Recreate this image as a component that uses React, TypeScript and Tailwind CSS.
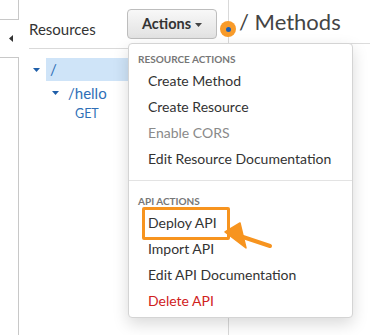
import { Fragment } from 'react'

const resourceActions = [
  { label: 'Create Method' },
  { label: 'Create Resource' },
  { label: 'Enable CORS', disabled: true },
  { label: 'Edit Resource Documentation' },
]

const apiActions = [
  { label: 'Deploy API', highlight: true },
  { label: 'Import API' },
  { label: 'Edit API Documentation' },
  { label: 'Delete API', danger: true },
]

function MenuItem({ label, disabled, danger }: { label: string; disabled?: boolean; danger?: boolean }) {
  const color = disabled ? 'text-[#8a8a8a]' : danger ? 'text-[#d0211c]' : 'text-[#333]'
  return (
    <div className={`h-[26px] flex items-center pl-[19px] text-[14px] ${color}`}>{label}</div>
  )
}

function Caret({ className }: { className?: string }) {
  return (
    <svg width="7" height="4" viewBox="0 0 7 4" className={className}>
      <path d="M0 0h7L3.5 4z" fill="currentColor" />
    </svg>
  )
}

export default function App() {
  return (
    <div
      className="relative w-[370px] h-[335px] overflow-hidden bg-white flex"
      style={{ fontFamily: 'Lato, "Open Sans", sans-serif' }}
    >
      {/* collapse tab */}
      <div className="w-[19px] shrink-0 flex flex-col">
        <div className="h-[19px] border-r border-[#c8c8c8]" />
        <div className="h-[39px] border-y border-[#c8c8c8] flex items-center justify-center pl-[2px]">
          <svg width="4" height="7" viewBox="0 0 4 7">
            <path d="M4 0v7L0 3.5z" fill="#333" />
          </svg>
        </div>
        <div className="flex-1 border-r border-[#c8c8c8]" />
      </div>

      {/* resources panel */}
      <div className="w-[209px] shrink-0 flex flex-col">
        <div className="h-[49px] ml-[10px] border-b border-[#d9d9d9] flex items-start justify-between pr-[11px]">
          <span className="mt-[19px] text-[15px] leading-[20px] text-[#333]">Resources</span>
          <button className="mt-[9px] h-[30px] w-[90px] rounded-[4px] border border-[#bdbdbd] bg-gradient-to-b from-[#f8f8f8] to-[#e2e2e2] flex items-center justify-center gap-[4px] text-[14.5px] font-bold text-[#333]">
            Actions
            <Caret className="text-[#444] mt-[1px]" />
          </button>
        </div>

        <div className="mt-[9px] flex flex-col text-[#2f6fb7]">
          <div className="h-[23px] flex items-center">
            <Caret className="ml-[14px] w-[7px] text-[#1f5fa9]" />
            <div className="ml-[6px] flex-1 h-full bg-[#cfe4f8] flex items-center pl-[4px] text-[15px]">/</div>
          </div>
          <div className="h-[24px] flex items-center">
            <Caret className="ml-[33px] text-[#1f5fa9]" />
            <span className="ml-[9px] text-[15px]">/hello</span>
          </div>
          <div className="h-[19px] flex items-center pl-[56px] text-[12.5px]">GET</div>
        </div>
      </div>

      {/* methods content */}
      <div className="flex-1 border-l border-[#d9d9d9] flex flex-col">
        <div className="h-[44px] border-b border-[#dcdcdc] flex items-center pl-[10px]">
          <span className="text-[22px] text-[#444] leading-none">/ Methods</span>
        </div>
      </div>

      {/* step marker */}
      <div className="absolute left-[220px] top-[21px] w-[16px] h-[16px] rounded-full bg-[#f89b2a] flex items-center justify-center">
        <div className="w-[5px] h-[5px] rounded-full bg-[#1c5fb5]" />
      </div>

      {/* actions dropdown */}
      <div className="absolute left-[128px] top-[43px] w-[225px] h-[275px] rounded-[4px] border border-[#d4d4d4] bg-white shadow-[0_6px_16px_rgba(0,0,0,0.15)] pt-[9px]">
        {[
          { title: 'Resource Actions', items: resourceActions },
          { title: 'API Actions', items: apiActions },
        ].map((group, i) => (
          <Fragment key={group.title}>
            {i > 0 && <div className="mt-[9px] mb-[14px] h-px bg-[#e3e3e3]" />}
            <div className="h-[13px] mb-[1px] flex items-center pl-[9px] text-[10px] font-bold uppercase text-[#777]">
              {group.title}
            </div>
            {group.items.map(item => (
              <MenuItem key={item.label} {...item} />
            ))}
          </Fragment>
        ))}

        <div className="absolute left-[13px] top-[163px] w-[88px] h-[33px] border-[3px] border-[#f7941f] rounded-[2px]" />
      </div>

      {/* pointer arrow */}
      <svg className="absolute left-0 top-0" width="370" height="335" viewBox="0 0 370 335">
        <path d="M243 237L270 246" stroke="#f7941f" strokeWidth="4" strokeLinecap="round" />
        <path d="M225 232L240 223L246 248z" fill="#f7941f" stroke="#f7941f" strokeWidth="1.5" strokeLinejoin="round" />
      </svg>
    </div>
  )
}
